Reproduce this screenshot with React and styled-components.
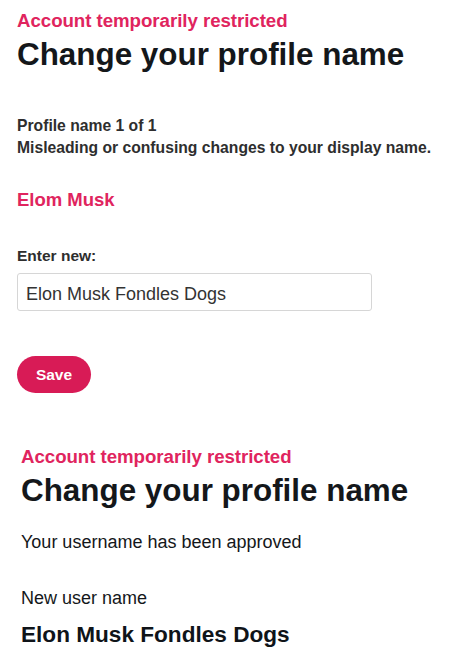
import React from "react";
import styled, { createGlobalStyle } from "styled-components";

const GlobalStyle = createGlobalStyle`
  html, body {
    margin: 0;
    padding: 0;
    background: #ffffff;
  }
  body {
    font-family: "Liberation Sans", Arial, Helvetica, sans-serif;
    color: #14171a;
  }
`;

const PINK = "#e0245e";

const Page = styled.div`
  width: 465px;
  height: 668px;
  overflow: hidden;
  background: #fff;
  display: flex;
  flex-direction: column;
`;

const Section = styled.section`
  display: flex;
  flex-direction: column;
  align-items: flex-start;
  padding-left: ${(p) => p.$indent}px;
  padding-top: ${(p) => p.$top}px;
`;

const Kicker = styled.div`
  font-size: 18.7px;
  line-height: 22px;
  font-weight: 700;
  color: ${PINK};
  letter-spacing: -0.05px;
`;

const Title = styled.h1`
  margin: 5px 0 0;
  font-size: 31.4px;
  line-height: 36px;
  font-weight: 700;
  color: #14171a;
`;

const Notice = styled.div`
  margin-top: 42px;
  font-size: 15.7px;
  line-height: 21.5px;
  font-weight: 700;
  color: #2e2e2e;
`;

const OldName = styled.div`
  margin-top: 31px;
  font-size: 18.5px;
  line-height: 22px;
  font-weight: 700;
  color: ${PINK};
`;

const Label = styled.label`
  margin-top: 35px;
  font-size: 15.5px;
  line-height: 20px;
  font-weight: 700;
  color: #2e2e2e;
`;

const TextInput = styled.input`
  margin-top: 7px;
  box-sizing: border-box;
  width: 355px;
  height: 38px;
  padding: 4px 8px 0;
  border: 1px solid #d6d6d6;
  border-radius: 3px;
  background: #fff;
  font-family: "Liberation Sans", Arial, sans-serif;
  font-size: 18px;
  color: #333;
  outline: none;
`;

const SaveButton = styled.button`
  margin-top: 45px;
  box-sizing: border-box;
  width: 74px;
  height: 37px;
  padding: 0;
  border: none;
  border-radius: 19px;
  background: #d81b56;
  color: #fff;
  font-family: "Liberation Sans", Arial, sans-serif;
  font-size: 15.5px;
  font-weight: 700;
  cursor: pointer;
`;

const Body = styled.p`
  margin: ${(p) => p.$gap}px 0 0;
  font-size: 18px;
  line-height: 22px;
  font-weight: 400;
  color: #14171a;
`;

const NewName = styled.div`
  margin-top: 12px;
  font-size: 22.6px;
  line-height: 28px;
  font-weight: 700;
  color: #0f1419;
`;

export default function App() {
  return (
    <>
      <GlobalStyle />
      <Page>
        <Section $indent={17} $top={10}>
          <Kicker>Account temporarily restricted</Kicker>
          <Title>Change your profile name</Title>
          <Notice>
            Profile name 1 of 1
            <br />
            Misleading or confusing changes to your display name.
          </Notice>
          <OldName>Elom Musk</OldName>
          <Label htmlFor="new-name">Enter new:</Label>
          <TextInput
            id="new-name"
            type="text"
            defaultValue="Elon Musk Fondles Dogs"
          />
          <SaveButton type="button">Save</SaveButton>
        </Section>
        <Section $indent={21} $top={53}>
          <Kicker>Account temporarily restricted</Kicker>
          <Title>Change your profile name</Title>
          <Body $gap={22}>Your username has been approved</Body>
          <Body $gap={34}>New user name</Body>
          <NewName>Elon Musk Fondles Dogs</NewName>
        </Section>
      </Page>
    </>
  );
}
